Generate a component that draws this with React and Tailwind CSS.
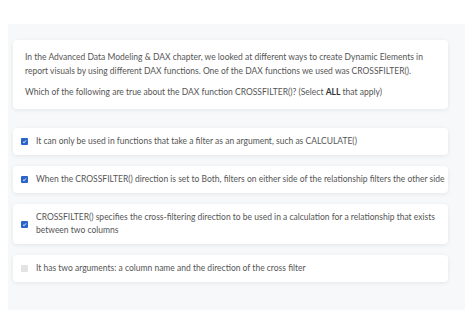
import React from 'react';

const options = [
  { lines: ['It can only be used in functions that take a filter as an argument, such as CALCULATE()'], checked: true },
  { lines: ['When the CROSSFILTER() direction is set to Both, filters on either side of the relationship filters the other side'], checked: true },
  {
    lines: [
      'CROSSFILTER() specifies the cross-filtering direction to be used in a calculation for a relationship that exists',
      'between two columns',
    ],
    checked: true,
  },
  { lines: ['It has two arguments: a column name and the direction of the cross filter'], checked: false },
];

const Checkbox = ({ checked }) =>
  checked ? (
    <span className="w-[7px] h-[7px] rounded-[1px] bg-[#2a64c8] flex items-center justify-center shrink-0">
      <svg width="5" height="5" viewBox="0 0 10 10">
        <path d="M2 5.5 L4.2 7.5 L8 2.8" fill="none" stroke="white" strokeWidth="1.8" />
      </svg>
    </span>
  ) : (
    <span className="w-[7px] h-[7px] rounded-[1px] bg-[#e3e3e3] shrink-0" />
  );

export default function App() {
  return (
    <div className="w-[474px] h-[334px] bg-white pt-[24px] pl-[8px] font-['Lato',sans-serif] text-[#555]">
      <div className="w-[457px] h-[286px] bg-[#f7f8fa] pt-[16px] pl-[5px]">
        <div className="w-[435px] bg-white rounded-[4px] shadow-[0_1px_4px_rgba(0,0,0,0.08)] px-[12px] py-[10px] text-[8.5px] leading-[14px] whitespace-nowrap">
          <p>
            In the Advanced Data Modeling &amp; DAX chapter, we looked at different ways to create Dynamic Elements in
            <br />
            report visuals by using different DAX functions. One of the DAX functions we used was CROSSFILTER().
          </p>
          <p className="mt-[7px]">
            Which of the following are true about the DAX function CROSSFILTER()? (Select <b className="text-[#333]">ALL</b> that apply)
          </p>
        </div>
        <div className="mt-[19px] flex flex-col gap-[11px]">
          {options.map((o, i) => (
            <div
              key={i}
              className="w-[435px] bg-white rounded-[4px] shadow-[0_1px_4px_rgba(0,0,0,0.08)] pl-[8px] pr-[8px] py-[7px] flex items-center gap-[8px] text-[8.5px] leading-[13px] whitespace-nowrap"
            >
              <Checkbox checked={o.checked} />
              <span>
                {o.lines.map((l, j) => (
                  <React.Fragment key={j}>
                    {j > 0 && <br />}
                    {l}
                  </React.Fragment>
                ))}
              </span>
            </div>
          ))}
        </div>
      </div>
    </div>
  );
}
